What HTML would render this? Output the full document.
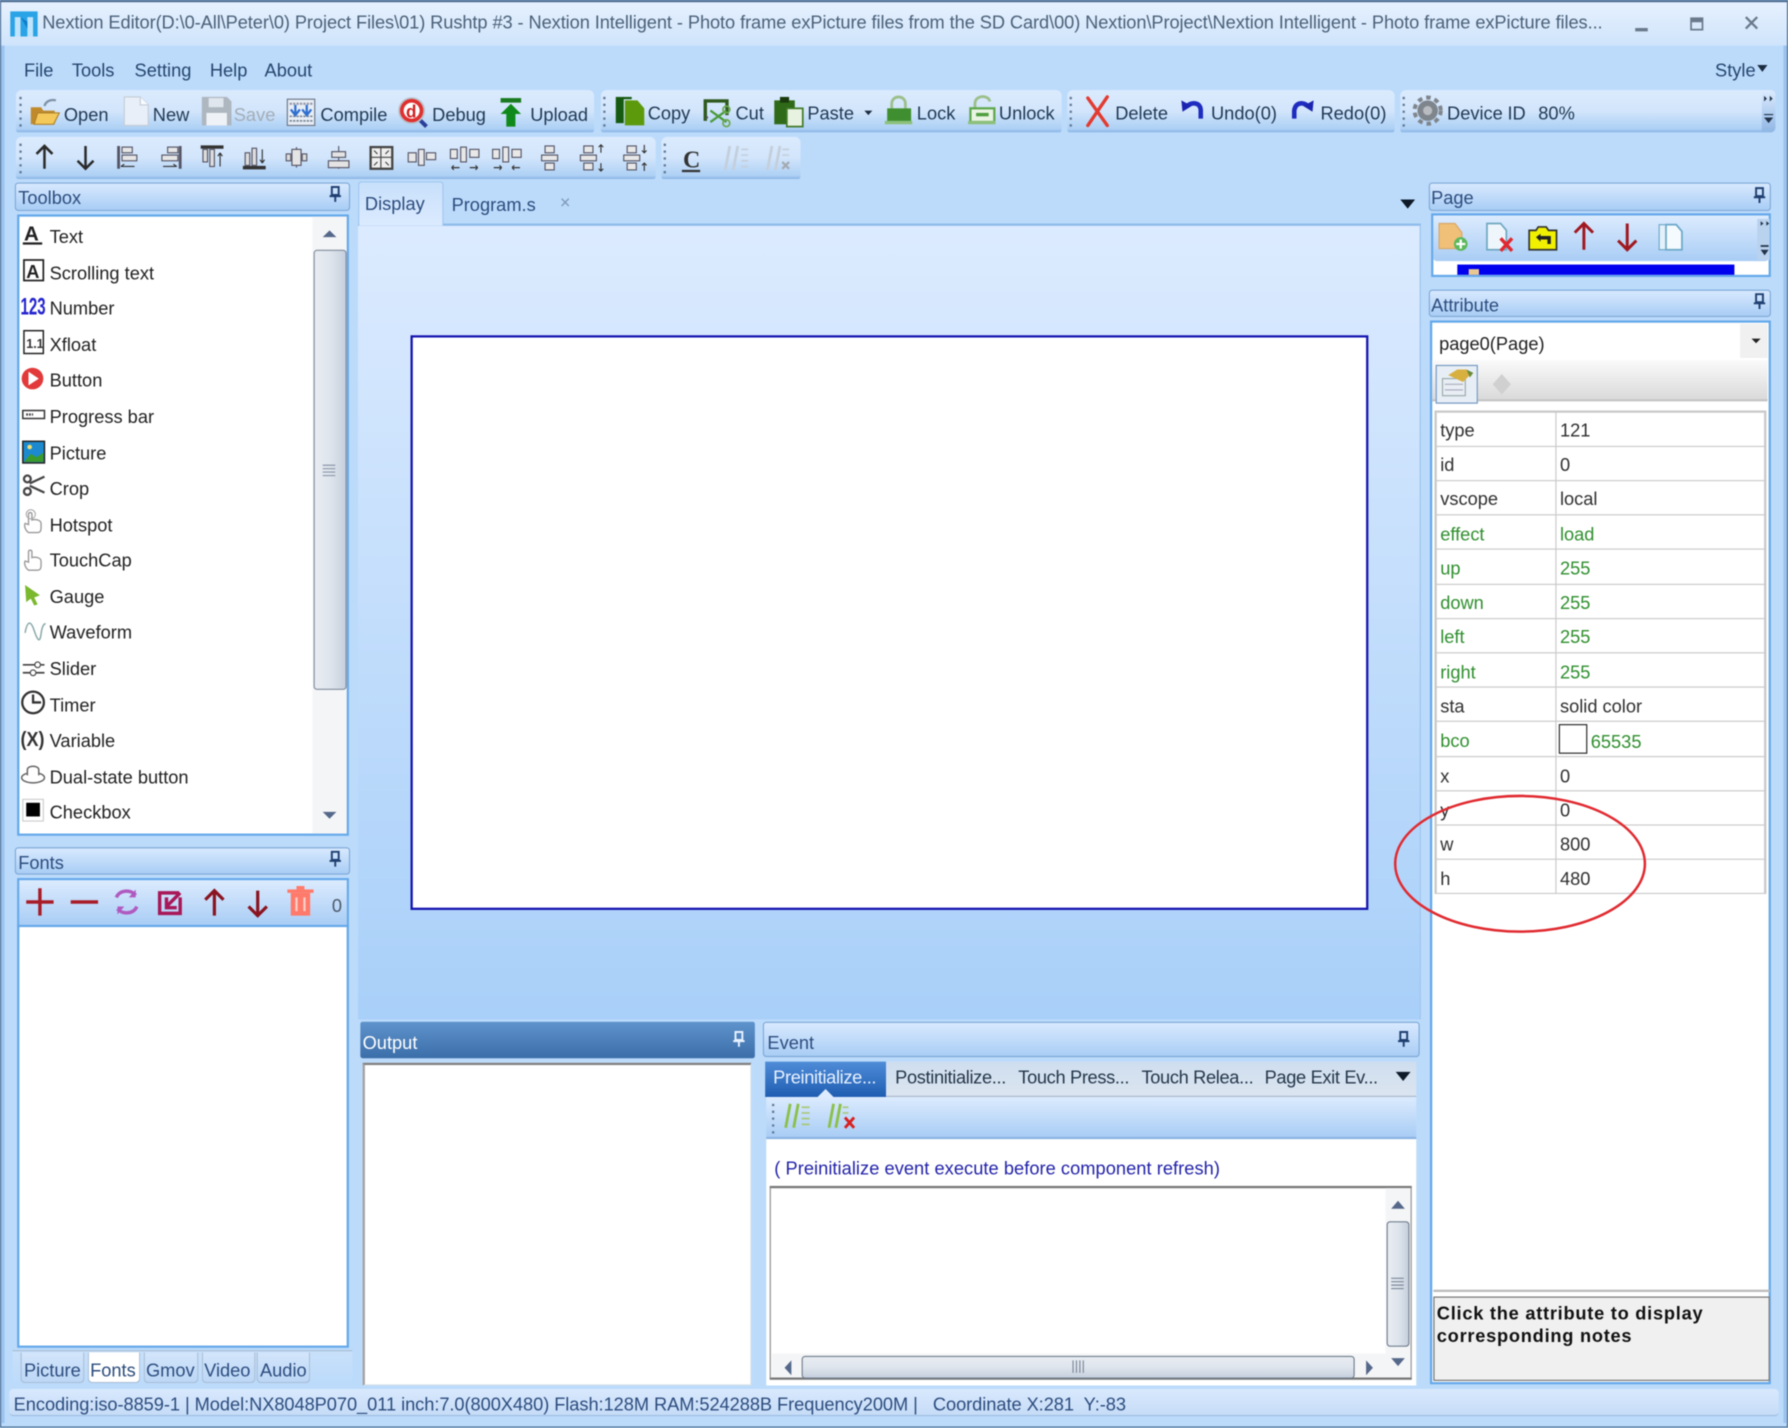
<!DOCTYPE html>
<html lang="en"><head><meta charset="utf-8"><title>Nextion Editor</title>
<style>
html,body{margin:0;padding:0;width:1788px;height:1427px;overflow:hidden;background:#bcdbfb}
#r{position:absolute;left:0;top:0;width:1568px;height:1252px;transform:scale(1.14031);transform-origin:0 0;overflow:hidden;background:#bcdbfb;font-family:"Liberation Sans",sans-serif;font-size:16px;color:#1f3854;filter:blur(.45px)}
#r div{position:absolute;box-sizing:border-box}
.t{position:absolute;white-space:nowrap;line-height:20px;height:20px;margin-top:2px}
.tb{background:linear-gradient(#dcebfe 0%,#d2e5fb 50%,#aed0f5 92%,#86b2e2 100%);border-radius:5px 5px 2px 2px}
.h{background:linear-gradient(#d8e9fe,#a9cdf5);border:1px solid #7ea8d6;border-radius:3px}
.hd{color:#2c4c7e}
.li{color:#222}
.g{color:#2f8f2f}
.r{color:#303030}
.btab{background:linear-gradient(#d3e5fb,#bcd7f6);border:1px solid #a9bdd4;border-top:0;border-radius:0 0 4px 4px;top:1186px;height:27px}
.line{background:#c9c9c9}
.ev{letter-spacing:-.3px;color:#24364a}
</style></head><body><div id="r">

<!-- window frame -->
<div style="left:0;top:0;width:1568px;height:1252px;border:1px solid #3f5f84;border-top:2px solid #4a6a8f"></div>
<div style="left:1px;top:2px;width:1566px;height:38px;background:linear-gradient(#e6f1fe,#cfe4fb)"></div>
<div style="left:1px;top:40px;width:3px;height:1208px;background:#9cc3ee"></div>
<div style="left:1564px;top:40px;width:3px;height:1208px;background:#9cc3ee"></div>

<span class="t" style="left:37px;top:9px;color:#4a6078;letter-spacing:-.076px">Nextion Editor(D:\0-All\Peter\0) Project Files\01) Rushtp #3 - Nextion Intelligent - Photo frame exPicture files from the SD Card\00) Nextion\Project\Nextion Intelligent - Photo frame exPicture files...</span>

<!-- menu -->
<span class="t" style="left:21px;top:51px;color:#25456e">File</span>
<span class="t" style="left:63px;top:51px;color:#25456e">Tools</span>
<span class="t" style="left:118px;top:51px;color:#25456e">Setting</span>
<span class="t" style="left:184px;top:51px;color:#25456e">Help</span>
<span class="t" style="left:232px;top:51px;color:#25456e">About</span>
<span class="t" style="left:1504px;top:51px;color:#25456e">Style</span>

<!-- toolbars row 1 -->
<div class="tb" style="left:14px;top:79px;width:507px;height:37px"></div>
<div class="tb" style="left:527px;top:79px;width:404px;height:37px"></div>
<div class="tb" style="left:936px;top:79px;width:287px;height:37px"></div>
<div class="tb" style="left:1228px;top:79px;width:327px;height:37px"></div>
<div style="left:1545px;top:79px;width:12px;height:37px;background:linear-gradient(#dcebfe,#8fb6e4);border-radius:0 4px 4px 0"></div>
<span class="t" style="left:56px;top:90px">Open</span>
<span class="t" style="left:134px;top:90px">New</span>
<span class="t" style="left:205px;top:90px;color:#a3adb8">Save</span>
<span class="t" style="left:281px;top:90px">Compile</span>
<span class="t" style="left:379px;top:90px">Debug</span>
<span class="t" style="left:465px;top:90px">Upload</span>
<span class="t" style="left:568px;top:89px">Copy</span>
<span class="t" style="left:645px;top:89px">Cut</span>
<span class="t" style="left:708px;top:89px">Paste</span>
<span class="t" style="left:804px;top:89px">Lock</span>
<span class="t" style="left:876px;top:89px">Unlock</span>
<span class="t" style="left:978px;top:89px">Delete</span>
<span class="t" style="left:1062px;top:89px">Undo(0)</span>
<span class="t" style="left:1158px;top:89px">Redo(0)</span>
<span class="t" style="left:1269px;top:89px">Device</span>
<span class="t" style="left:1322px;top:89px">ID</span>
<span class="t" style="left:1349px;top:89px">80%</span>

<!-- toolbars row 2 -->
<div class="tb" style="left:14px;top:120px;width:561px;height:37px"></div>
<div class="tb" style="left:580px;top:120px;width:122px;height:37px"></div>

<!-- Toolbox -->
<div class="h" style="left:13px;top:160px;width:294px;height:25px"></div>
<span class="t hd" style="left:16px;top:163px">Toolbox</span>
<div style="left:15px;top:188px;width:291px;height:545px;background:#fff;border:2px solid #64a8ea"></div>
<div style="left:274px;top:190px;width:30px;height:541px;background:#f4f5f7"></div>
<div style="left:275px;top:219px;width:29px;height:386px;background:linear-gradient(90deg,#e8ecf2,#dfe5ed 50%,#c6d0de);border:1px solid #7d8a9a;border-radius:3px"></div>
<span class="t li" style="left:43.500px;top:197px">Text</span>
<span class="t li" style="left:43.500px;top:229px">Scrolling text</span>
<span class="t li" style="left:43.500px;top:260px">Number</span>
<span class="t li" style="left:43.500px;top:292px">Xfloat</span>
<span class="t li" style="left:43.500px;top:323px">Button</span>
<span class="t li" style="left:43.500px;top:355px">Progress bar</span>
<span class="t li" style="left:43.500px;top:387px">Picture</span>
<span class="t li" style="left:43.500px;top:418px">Crop</span>
<span class="t li" style="left:43.500px;top:450px">Hotspot</span>
<span class="t li" style="left:43.500px;top:481px">TouchCap</span>
<span class="t li" style="left:43.500px;top:513px">Gauge</span>
<span class="t li" style="left:43.500px;top:544px">Waveform</span>
<span class="t li" style="left:43.500px;top:576px">Slider</span>
<span class="t li" style="left:43.500px;top:608px">Timer</span>
<span class="t li" style="left:43.500px;top:639px">Variable</span>
<span class="t li" style="left:43.500px;top:671px">Dual-state button</span>
<span class="t li" style="left:43.500px;top:702px">Checkbox</span>

<!-- Fonts -->
<div class="h" style="left:13px;top:743px;width:294px;height:24px"></div>
<span class="t hd" style="left:16px;top:746px">Fonts</span>
<div style="left:15px;top:770px;width:291px;height:412px;background:#fff;border:2px solid #64a8ea"></div>
<div style="left:17px;top:772px;width:287px;height:39px;background:linear-gradient(#dcebfe,#a9cdf5)"></div>
<div style="left:15px;top:811px;width:291px;height:2px;background:#64a8ea"></div>
<span class="t" style="left:291px;top:784px;color:#4c5a6a">0</span>

<!-- bottom-left tabs -->
<div style="left:11px;top:1184px;width:298px;height:29px;background:linear-gradient(#c9e0fa,#bcdbfb);border-top:1px solid #a9bdd4"></div>
<div class="btab" style="left:18px;width:56px"></div>
<div class="btab" style="left:77px;width:46px;background:#fff"></div>
<div class="btab" style="left:126px;width:48px"></div>
<div class="btab" style="left:177px;width:47px"></div>
<div class="btab" style="left:225px;width:47px"></div>
<span class="t hd" style="left:21px;top:1191px">Picture</span>
<span class="t hd" style="left:79px;top:1191px">Fonts</span>
<span class="t hd" style="left:128px;top:1191px">Gmov</span>
<span class="t hd" style="left:179px;top:1191px">Video</span>
<span class="t hd" style="left:228px;top:1191px">Audio</span>

<!-- Center -->
<div style="left:314px;top:196px;width:932px;height:698px;background:linear-gradient(#dcebff,#a9d0f9);border-top:2px solid #8fbcea;border-right:1px solid #9cc3ec"></div>
<div style="left:314px;top:159px;width:75px;height:39px;background:linear-gradient(#c8e0fb,#dcebff);border:1px solid #a0c5ee;border-bottom:0;border-radius:3px 3px 0 0"></div>
<span class="t" style="left:320px;top:168px;color:#2c4c7e">Display</span>
<span class="t" style="left:396px;top:169px;color:#2c4c7e">Program.s</span>
<span class="t" style="left:491px;top:167px;color:#7e98b6">×</span>
<div style="left:359.500px;top:293.500px;width:840px;height:504px;background:#fff;border:2px solid #1414b0"></div>

<!-- Output -->
<div style="left:316px;top:896px;width:346px;height:32px;background:linear-gradient(#5f93cc,#3b6ea9);border-radius:2px"></div>
<span class="t" style="left:318px;top:904px;color:#fff">Output</span>
<div style="left:318px;top:932px;width:341px;height:283px;background:#fff;border:1px solid #d5dfe8;border-top:2px solid #7f7f7f;border-left:2px solid #a0a0a0"></div>

<!-- Event -->
<div class="h" style="left:669px;top:896px;width:576px;height:31px"></div>
<span class="t" style="left:673px;top:904px;color:#2c4c7e">Event</span>
<div style="left:671px;top:931px;width:571px;height:31px;background:linear-gradient(#cfdeef,#dbe5f0);border-bottom:1px solid #aab8c8"></div>
<div style="left:671px;top:931px;width:106px;height:31px;background:linear-gradient(#4f8cd8,#1f5db2)"></div>
<span class="t ev" style="left:678px;top:934px;color:#eaf3ff">Preinitialize...</span>
<span class="t ev" style="left:785px;top:934px">Postinitialize...</span>
<span class="t ev" style="left:893px;top:934px">Touch Press...</span>
<span class="t ev" style="left:1001px;top:934px">Touch Relea...</span>
<span class="t ev" style="left:1109px;top:934px">Page Exit Ev...</span>
<div style="left:672px;top:962px;width:570px;height:37px;background:linear-gradient(#dcebfe,#a9cdf5);border-bottom:2px solid #8ab3e0"></div>
<div style="left:672px;top:999px;width:570px;height:216px;background:#fff"></div>
<span class="t" style="left:679px;top:1014px;color:#2222aa;letter-spacing:.04px">( Preinitialize event execute before component refresh)</span>
<div style="left:675px;top:1040px;width:563px;height:170px;background:#fff;border:1px solid #8a8a8a;border-top:2px solid #777;border-bottom:2px solid #777"></div>
<div style="left:1215px;top:1042px;width:22px;height:166px;background:#f4f5f7"></div>
<div style="left:677px;top:1187px;width:560px;height:21px;background:#f4f5f7"></div>
<div style="left:1216px;top:1071px;width:20px;height:110px;background:linear-gradient(90deg,#e8ecf2,#dfe5ed 50%,#c6d0de);border:1px solid #6f7c8c;border-radius:3px"></div>
<div style="left:703px;top:1189px;width:485px;height:20px;background:linear-gradient(#e8ecf2,#dfe5ed 50%,#c6d0de);border:1px solid #6f7c8c;border-radius:3px"></div>

<!-- Right panels -->
<div class="h" style="left:1253px;top:160px;width:300px;height:25px"></div>
<span class="t hd" style="left:1255px;top:163px">Page</span>
<div style="left:1255px;top:187px;width:298px;height:56px;background:#fff;border:2px solid #64a8ea"></div>
<div style="left:1257px;top:189px;width:294px;height:40px;background:linear-gradient(#dcebfe,#a9cdf5);border-radius:0 0 3px 3px"></div>
<div style="left:1278px;top:232px;width:243px;height:9px;background:#0000ee"></div>
<div style="left:1288px;top:236px;width:9px;height:5px;background:#e8c890"></div>
<div class="h" style="left:1253px;top:254px;width:300px;height:24px"></div>
<span class="t hd" style="left:1255px;top:257px">Attribute</span>
<div style="left:1254px;top:281px;width:299px;height:933px;background:#fff;border:2px solid #64a8ea"></div>
<div style="left:1526px;top:284px;width:24px;height:30px;background:#f0f0f0"></div>
<span class="t" style="left:1262px;top:291px;color:#222">page0(Page)</span>
<div style="left:1256px;top:316px;width:294px;height:36px;background:linear-gradient(#fafafa,#dadada);border-bottom:2px solid #c4c4c4"></div>
<div style="left:1259px;top:320px;width:37px;height:34px;background:#e8eef5;border:1px solid #6f97c2"></div>

<!-- attribute grid -->
<div style="left:1258px;top:360px;width:291px;height:424px;background:#fff;border:2px solid #c9c9c9;border-bottom:1px solid #c9c9c9"></div>
<div class="line" style="left:1364px;top:360px;width:1px;height:424px"></div>
<div class="line" style="left:1258px;top:391px;width:291px;height:1px"></div>
<div class="line" style="left:1258px;top:421px;width:291px;height:1px"></div>
<div class="line" style="left:1258px;top:451px;width:291px;height:1px"></div>
<div class="line" style="left:1258px;top:481px;width:291px;height:1px"></div>
<div class="line" style="left:1258px;top:512px;width:291px;height:1px"></div>
<div class="line" style="left:1258px;top:542px;width:291px;height:1px"></div>
<div class="line" style="left:1258px;top:572px;width:291px;height:1px"></div>
<div class="line" style="left:1258px;top:602px;width:291px;height:1px"></div>
<div class="line" style="left:1258px;top:632px;width:291px;height:1px"></div>
<div class="line" style="left:1258px;top:663px;width:291px;height:1px"></div>
<div class="line" style="left:1258px;top:693px;width:291px;height:1px"></div>
<div class="line" style="left:1258px;top:723px;width:291px;height:1px"></div>
<div class="line" style="left:1258px;top:753px;width:291px;height:1px"></div>
<span class="t r" style="left:1263px;top:367px">type</span><span class="t r" style="left:1368px;top:367px">121</span>
<span class="t r" style="left:1263px;top:397px">id</span><span class="t r" style="left:1368px;top:397px">0</span>
<span class="t r" style="left:1263px;top:427px">vscope</span><span class="t r" style="left:1368px;top:427px">local</span>
<span class="t g" style="left:1263px;top:458px">effect</span><span class="t g" style="left:1368px;top:458px">load</span>
<span class="t g" style="left:1263px;top:488px">up</span><span class="t g" style="left:1368px;top:488px">255</span>
<span class="t g" style="left:1263px;top:518px">down</span><span class="t g" style="left:1368px;top:518px">255</span>
<span class="t g" style="left:1263px;top:548px">left</span><span class="t g" style="left:1368px;top:548px">255</span>
<span class="t g" style="left:1263px;top:579px">right</span><span class="t g" style="left:1368px;top:579px">255</span>
<span class="t r" style="left:1263px;top:609px">sta</span><span class="t r" style="left:1368px;top:609px">solid color</span>
<span class="t g" style="left:1263px;top:639px">bco</span>
<div style="left:1367px;top:635px;width:25px;height:26px;background:#fff;border:1.5px solid #222"></div>
<span class="t g" style="left:1395px;top:640px">65535</span>
<span class="t r" style="left:1263px;top:670px">x</span><span class="t r" style="left:1368px;top:670px">0</span>
<span class="t r" style="left:1263px;top:700px">y</span><span class="t r" style="left:1368px;top:700px">0</span>
<span class="t r" style="left:1263px;top:730px">w</span><span class="t r" style="left:1368px;top:730px">800</span>
<span class="t r" style="left:1263px;top:760px">h</span><span class="t r" style="left:1368px;top:760px">480</span>

<!-- notes -->
<div style="left:1257px;top:1131px;width:295px;height:2px;background:#bcbcbc"></div>
<div style="left:1257px;top:1137px;width:295px;height:74px;background:#f0f0f0;border:1px solid #707070"></div>
<span class="t" style="left:1260px;top:1141px;font-weight:bold;color:#111;letter-spacing:.65px">Click the attribute to display</span>
<span class="t" style="left:1260px;top:1161px;font-weight:bold;color:#111;letter-spacing:.65px">corresponding notes</span>

<!-- status -->
<div style="left:8px;top:1218px;width:1552px;height:24px;background:linear-gradient(#d9e9fd,#c6dcf7);border-bottom:1px solid #97b8dd;border-radius:4px"></div>
<span class="t" style="left:12px;top:1221px;letter-spacing:-.05px;color:#2c4c7e">Encoding:iso-8859-1 | Model:NX8048P070_011 inch:7.0(800X480) Flash:128M RAM:524288B Frequency200M |&nbsp;&nbsp; Coordinate X:281&nbsp; Y:-83</span>

<!-- icon layer -->
<svg style="position:absolute;left:0;top:0" width="1568" height="1252" viewBox="0 0 1568 1252" xmlns="http://www.w3.org/2000/svg">
<!-- logo -->
<rect x="9" y="10" width="24" height="22" fill="#2aa4e6"/>
<path d="M13 32V15h5v17M24 32V15h5v17" fill="#bfe4fb"/>
<path d="M18 15l6 10v-6z" fill="#0f7ccc"/>
<!-- window buttons -->
<path d="M1434 26h11" stroke="#6a7a8c" stroke-width="3"/>
<rect x="1483" y="16" width="10" height="10" fill="none" stroke="#6a7a8c" stroke-width="1.5"/><path d="M1483 18h10" stroke="#6a7a8c" stroke-width="3"/>
<path d="M1531 15l10 10M1541 15l-10 10" stroke="#6a7a8c" stroke-width="2"/>
<path d="M1541 57h9l-4.500 6z" fill="#1c2c40"/>
<!-- grip dots -->
<path d="M18 85v26M530 85v26M939 85v26M1231 85v26M18 126v26M583 126v26M678 968v26" stroke="#5f7894" stroke-width="2" stroke-dasharray="2 4"/>

<!-- Open -->
<path d="M27 94h9l2 3h10v12H27z" fill="#c08a2c"/><path d="M30 109l3-10h19l-5 10z" fill="#f4c95a" stroke="#b0822a"/>
<path d="M39 93c1-4 5-6 10-5" fill="none" stroke="#7f93a8" stroke-width="2"/>
<!-- New -->
<path d="M109 85h14l7 7v18h-21z" fill="#e9eff8" stroke="#c4ccd6"/><path d="M123 85v7h7" fill="#f8fbff" stroke="#c4ccd6"/>
<!-- Save -->
<path d="M177 85h22l4 4v21h-26z" fill="#aeb6bf"/><rect x="183" y="86" width="13" height="8" fill="#dfe6ee"/><rect x="181" y="99" width="18" height="11" fill="#eef2f7"/>
<!-- Compile -->
<rect x="252" y="87" width="24" height="23" fill="#e8eef6" stroke="#6a7484"/><path d="M254 102h20M254 106h20" stroke="#7a8696" stroke-width="1.500" stroke-dasharray="2 1"/><path d="M254 91h20" stroke="#99a" stroke-width="2" stroke-dasharray="2 1"/>
<path d="M259 92v8M255 96l4 5 4-5M269 92v8M265 96l4 5 4-5" fill="none" stroke="#2f6fd0" stroke-width="2"/>
<!-- Debug -->
<path d="M367 104l7 7" stroke="#2a3f9a" stroke-width="3.500"/><circle cx="361" cy="97" r="11" fill="#e03030" stroke="#b8c0c8" stroke-width="1.500"/><circle cx="361" cy="97" r="7" fill="#fff"/>
<text x="356" y="103" font-family="Liberation Sans" font-size="15" font-weight="bold" fill="#d02020">d</text>
<!-- Upload -->
<rect x="439" y="86" width="18" height="4" fill="#1a7a20"/><path d="M448 91l9 9h-5v11h-8v-11h-5z" fill="#0f8a1a"/>
<!-- Copy -->
<rect x="540" y="85" width="7" height="23" fill="#155a10"/><rect x="546" y="85" width="8" height="2" fill="#155a10"/><path d="M548 88h11l6 7v15h-17z" fill="#5c9a0c"/>
<!-- Cut -->
<path d="M617 87h22v14h-3V90h-16v16h-3z" fill="#2f5a1e"/><path d="M623 97l14 10M623 107l14-10" stroke="#4a9a3c" stroke-width="2"/><circle cx="620" cy="103" r="1" fill="#555"/><circle cx="637" cy="96" r="3" fill="none" stroke="#6aa84f" stroke-width="1.500"/><circle cx="637" cy="108" r="3" fill="none" stroke="#6aa84f" stroke-width="1.500"/>
<!-- Paste -->
<rect x="679" y="88" width="18" height="21" fill="#2f6a18"/><rect x="684" y="85" width="8" height="5" fill="#1a3a0c"/><rect x="690" y="95" width="14" height="16" fill="#e8f2e0" stroke="#3f7a28" stroke-width="1.500"/>
<path d="M758 97h7l-3.500 4z" fill="#1c2c40"/>
<!-- Lock -->
<path d="M782 95v-4c0-8 12-8 12 0v4" fill="none" stroke="#9cc08c" stroke-width="2.500"/><rect x="778" y="95" width="21" height="12" fill="#3f8f30"/><rect x="776" y="106" width="24" height="3" fill="#8cc07c"/>
<!-- Unlock -->
<path d="M855 95v-4c0-8 12-8 13-2" fill="none" stroke="#9cc08c" stroke-width="2.500"/><rect x="851" y="95" width="21" height="12" fill="#eaf4e4" stroke="#5fa84f" stroke-width="2"/><rect x="856" y="99" width="11" height="3" fill="#4f9f3f"/><rect x="849" y="106" width="24" height="3" fill="#8cc07c"/>
<!-- Delete -->
<path d="M954 86l17 24M971 85l-17 25" stroke="#e23b30" stroke-width="3" stroke-linecap="round"/>
<!-- Undo / Redo -->
<path d="M1041 93c5-4 12-3 12 4v7" fill="none" stroke="#1f2cc0" stroke-width="4"/><path d="M1036 88l1 10 8-5z" fill="#1a24b0"/>
<path d="M1147 93c-5-4-11-3-12 4v7" fill="none" stroke="#1f2cc0" stroke-width="4"/><path d="M1152 88l-1 10-8-5z" fill="#1a24b0"/>
<!-- Gear -->
<circle cx="1252" cy="97" r="9" fill="#7f858c"/><circle cx="1252" cy="97" r="11.500" fill="none" stroke="#7f858c" stroke-width="3.500" stroke-dasharray="4 3.500"/><circle cx="1252" cy="97" r="4" fill="#b8bcc0"/>
<!-- overflow -->
<path d="M1547 84l2.500 2.500-2.500 2.500zM1552 84l2.500 2.500-2.500 2.500zM1548 100h6M1547 103h8l-4 5z" fill="#223348" stroke="none"/><path d="M1547 100.500h8" stroke="#223348"/>

<!-- Row 2 -->
<g fill="none" stroke="#2a2a2a" stroke-width="2.200">
<path d="M39 148v-20M32 135l7-7 7 7"/>
<path d="M75 128v20M68 141l7 7 7-7"/>
</g>
<g fill="none" stroke="#556">
<path d="M104 128v20" stroke-width="2.500"/><rect x="107" y="129" width="9" height="5" fill="#e6e6e6"/><rect x="107" y="136" width="13" height="5" fill="#e6e6e6"/><path d="M106 146h12M106 146l3-2" stroke="#333"/>
<path d="M158 128v20" stroke-width="2.500"/><rect x="147" y="129" width="9" height="5" fill="#e6e6e6"/><rect x="142" y="136" width="14" height="5" fill="#e6e6e6"/><path d="M143 146h12M155 146l-3-2" stroke="#333"/>
<path d="M176 129h20" stroke="#333" stroke-width="3"/><rect x="178" y="131" width="4" height="11" fill="#ddd"/><rect x="184" y="131" width="4" height="15" fill="#ddd"/><path d="M193 146v-12M193 134l-2 3M193 134l2 3" stroke="#333"/>
<path d="M213 147h20" stroke="#333" stroke-width="3"/><rect x="215" y="134" width="4" height="11" fill="#ddd"/><rect x="221" y="130" width="4" height="15" fill="#ddd"/><path d="M230 131v12M230 143l-2-3M230 143l2-3" stroke="#333"/>
<path d="M260 129v18"/><rect x="256" y="131" width="8" height="14" fill="#e4e4e4"/><rect x="251" y="135" width="4" height="6" fill="#ddd"/><rect x="265" y="135" width="4" height="6" fill="#ddd"/>
<path d="M297 128v20"/><rect x="291" y="133" width="12" height="5" fill="#e4e4e4"/><rect x="288" y="141" width="18" height="6" fill="#e4e4e4"/>
<rect x="325" y="129" width="19" height="19" fill="#efefef" stroke="#444" stroke-width="2"/><path d="M334 129v19M325 138h19M328 132l3 3M341 132l-3 3M328 145l3-3M341 145l-3-3" stroke="#444"/>
<rect x="358" y="134" width="7" height="8" fill="#e8e8e8"/><rect x="367" y="131" width="5" height="14" fill="#e8e8e8"/><rect x="374" y="134" width="8" height="6" fill="#e8e8e8"/>
<rect x="395" y="131" width="6" height="8" fill="#e8e8e8"/><rect x="404" y="129" width="5" height="13" fill="#e8e8e8"/><rect x="412" y="131" width="8" height="7" fill="#e8e8e8"/><path d="M396 147h7M396 147l2-2M396 147l2 2M412 147h7M419 147l-2-2M419 147l-2 2" stroke="#333"/>
<rect x="432" y="131" width="6" height="8" fill="#e8e8e8"/><rect x="441" y="129" width="5" height="13" fill="#e8e8e8"/><rect x="449" y="131" width="8" height="7" fill="#e8e8e8"/><path d="M433 147h7M440 147l-2-2M440 147l-2 2M449 147h7M449 147l2-2M449 147l2 2" stroke="#333"/>
<rect x="478" y="128" width="8" height="6" fill="#e8e8e8"/><rect x="475" y="136" width="14" height="5" fill="#e8e8e8"/><rect x="478" y="143" width="8" height="6" fill="#e8e8e8"/>
<rect x="512" y="128" width="8" height="6" fill="#e8e8e8"/><rect x="509" y="136" width="14" height="5" fill="#e8e8e8"/><rect x="512" y="143" width="8" height="6" fill="#e8e8e8"/><path d="M527 127v7M525 129l2-2 2 2M527 143v7M525 148l2 2 2-2" stroke="#333"/>
<rect x="550" y="128" width="8" height="6" fill="#e8e8e8"/><rect x="547" y="136" width="14" height="5" fill="#e8e8e8"/><rect x="550" y="143" width="8" height="6" fill="#e8e8e8"/><path d="M565 127v7M563 132l2 2 2-2M565 143v7M563 145l2-2 2 2" stroke="#333"/>
</g>
<text x="599" y="147" font-family="Liberation Serif" font-size="21" font-weight="bold" fill="#333">C</text><path d="M598 150h16" stroke="#333" stroke-width="2"/>
<g fill="none" stroke="#c4cfdc" stroke-width="2.500"><path d="M636 149l4-21M643 149l4-21M673 149l4-21M680 149l4-21"/><path d="M650 131h6M650 136h6M650 141h6M650 146h6" stroke-width="1.500"/><path d="M686 131h6M686 136h6" stroke-width="1.500"/></g>
<path d="M686 142l6 6M692 142l-6 6" stroke="#a4aab2" stroke-width="2"/>

<!-- pins -->
<g fill="none" stroke="#1f3f70" stroke-width="1.700">
<path d="M291 164h6v7h-6zM289 172h10M294 172v5"/>
<path d="M291 747h6v7h-6zM289 755h10M294 755v5"/>
<path d="M1540 165h6v7h-6zM1538 173h10M1543 173v5"/>
<path d="M1540 258h6v7h-6zM1538 266h10M1543 266v5"/>
<path d="M1228 905h6v7h-6zM1226 913h10M1231 913v5"/>
<path d="M645 905h6v7h-6zM643 913h10M648 913v5" stroke="#e8f2ff"/>
</g>
<!-- scroll arrows -->
<path d="M283 208h12l-6-6zM283 712h12l-6 6z" fill="#55688a"/>
<path d="M283 408h11M283 411h11M283 414h11M283 417h11" stroke="#8a96a8"/>
<path d="M1220 1060h12l-6-7zM1220 1191h12l-6 7z" fill="#55688a"/>
<path d="M1220 1121h11M1220 1124h11M1220 1127h11M1220 1130h11" stroke="#7a8698"/>
<path d="M694 1193v13l-6-6.500zM1198 1193v13l6-6.500z" fill="#55688a"/>
<path d="M941 1193v11M944 1193v11M947 1193v11M950 1193v11" stroke="#7a8698"/>
<!-- tab arrows -->
<path d="M1228 175h13l-6.500 8z" fill="#0e1a28"/>
<path d="M1224 940h13l-6.500 8z" fill="#0e1a28"/>
<path d="M717 962l7-7 7 7z" fill="#dcebfe"/>
<path d="M1536 297h8l-4 4z" fill="#222"/>

<!-- Toolbox icons -->
<g>
<text x="21" y="211" font-family="Liberation Sans" font-size="18" font-weight="bold" fill="#222">A</text><path d="M20 213.500h17" stroke="#222" stroke-width="2"/>
<rect x="21" y="228" width="17" height="18" fill="#fff" stroke="#222" stroke-width="1.500"/><text x="23" y="244" font-family="Liberation Sans" font-size="16" font-weight="bold" fill="#222">A</text>
<text x="18" y="276" font-family="Liberation Sans" font-size="21" font-weight="bold" fill="#2424d0" textLength="22" lengthAdjust="spacingAndGlyphs">123</text>
<rect x="21" y="290" width="17" height="20" fill="#fff" stroke="#222" stroke-width="1.300"/><text x="23" y="305" font-family="Liberation Sans" font-size="11" font-weight="bold" fill="#333">1.1</text>
<circle cx="28.500" cy="332" r="9.500" fill="#e23a3a"/><path d="M25 326l9 6-9 6z" fill="#fff"/>
<rect x="20" y="360" width="19" height="7" fill="#fff" stroke="#333" stroke-width="1.300"/><path d="M23 363.500h6" stroke="#333" stroke-width="2" stroke-dasharray="1.500 1"/>
<rect x="20" y="387" width="19" height="19" fill="#1d8ad0" stroke="#222" stroke-width="1.300"/><path d="M21 405l6-7 5 3 6-4v8z" fill="#3a9a2a"/><circle cx="26" cy="392" r="2" fill="#f4e070"/>
<path d="M26 424l13-6M26 426l13 6" stroke="#444" stroke-width="2"/><circle cx="24" cy="420" r="3" fill="#fff" stroke="#444" stroke-width="2"/><circle cx="24" cy="431" r="3" fill="#fff" stroke="#444" stroke-width="2"/>
<path d="M25 467c-3-2-4-6-3-8l3 1v-9c0-2 3-2 3 0v5c3-1 8 0 8 3v4c0 3-1 4-3 4z" fill="#fff" stroke="#999" stroke-width="1.200"/><circle cx="27" cy="451" r="4" fill="none" stroke="#aaa"/>
<path d="M25 500c-3-2-4-6-3-8l3 1v-9c0-2 3-2 3 0v5c3-1 8 0 8 3v4c0 3-1 4-3 4z" fill="#fff" stroke="#999" stroke-width="1.200"/>
<path d="M22 513l13 9-5 2 3 6-3 1-3-6-4 3z" fill="#7ab82e"/>
<path d="M22 553c2-11 5-11 8-2s5 11 6 3 3-9 4-9" transform="translate(0 2)" fill="none" stroke="#8aa8a8" stroke-width="1.300"/>
<path d="M20 583h19M20 590h19" stroke="#444" stroke-width="1.500"/><circle cx="33" cy="583" r="2.500" fill="#fff" stroke="#444"/><circle cx="29" cy="590" r="2.500" fill="#fff" stroke="#444"/>
<circle cx="29" cy="616" r="9.500" fill="#fff" stroke="#333" stroke-width="2"/><path d="M29 609v7h7" fill="none" stroke="#333" stroke-width="2"/>
<text x="18" y="654" font-family="Liberation Sans" font-size="18" font-weight="bold" fill="#333" textLength="21" lengthAdjust="spacingAndGlyphs">(X)</text>
<ellipse cx="29" cy="682" rx="10" ry="4.500" fill="none" stroke="#666" stroke-width="1.300"/><path d="M24 680v-5c0-4 10-4 10 0v5" fill="#fff" stroke="#666" stroke-width="1.300"/>
<rect x="20" y="701" width="18" height="19" fill="#fff" stroke="#ccc"/><rect x="23" y="704" width="12" height="12" fill="#000"/>
</g>

<!-- Fonts toolbar -->
<g fill="none" stroke="#a81c28" stroke-width="3">
<path d="M35 779v24M23 791h24"/>
<path d="M62 791h24"/>
</g>
<path d="M102 787c3-7 13-7 17-2M120 795c-3 7-13 7-17 2" fill="none" stroke="#b05ac0" stroke-width="3"/><path d="M119 780v7h-6M103 802v-7h6" fill="#b05ac0"/>
<path d="M157 783h-17v18h18v-14" fill="none" stroke="#a81858" stroke-width="3"/><path d="M158 783l-12 12M146 787v9h9" fill="none" stroke="#a81858" stroke-width="3"/>
<g fill="none" stroke="#8a1420" stroke-width="2.800"><path d="M188 803v-22M180 789l8-8 8 8"/><path d="M226 781v22M218 795l8 8 8-8"/></g>
<rect x="255" y="783" width="17" height="20" fill="#ff7a6a"/><rect x="252" y="780" width="23" height="3" fill="#ff7a6a"/><rect x="260" y="777" width="7" height="3" fill="#ff7a6a"/><path d="M260 787v12M267 787v12" stroke="#ffd0c8" stroke-width="2"/>

<!-- Event toolbar -->
<g fill="none" stroke="#8cc04a" stroke-width="2.500"><path d="M689 989l4-21M696 989l4-21M727 989l4-21M733 989l4-21"/><path d="M703 971h7M703 976h7M703 981h7M703 986h7M739 971h5M739 976h5" stroke-width="1.500" stroke="#a8c878"/></g>
<path d="M741 980l8 9M749 980l-8 9" stroke="#d82020" stroke-width="2.500"/>

<!-- Page toolbar -->
<path d="M1262 196h14l6 8v14h-20z" fill="#f0c078" stroke="#d8a868"/><circle cx="1281" cy="214" r="6" fill="#5cb85c"/><path d="M1277 214h8M1281 210v8" stroke="#fff" stroke-width="2"/>
<path d="M1304 196h12l5 6v17h-17z" fill="#eef6fc" stroke="#6fa8c0" stroke-width="1.500"/><path d="M1316 209l10 11M1326 209l-10 11" stroke="#e02830" stroke-width="3"/>
<path d="M1341 202h6l2-3h7l2 3h7v17h-24z" fill="#f0f000" stroke="#333" stroke-width="1.500"/><path d="M1347 208l4-3v2h9v7h-3v-4h-6v2z" fill="#222"/>
<g fill="none" stroke="#a01820" stroke-width="2.600"><path d="M1389 219v-22M1381 204l8-8 8 8"/><path d="M1427 196v22M1419 211l8 8 8-8"/></g>
<path d="M1455 197h8v22h-8z" fill="#e4f0fa" stroke="#6aa8c8"/><path d="M1461 197h9l5 6v16h-14z" fill="#f4fafe" stroke="#6aa8c8" stroke-width="1.500"/>
<rect x="1541" y="192" width="11" height="36" fill="#b9d2ee"/><path d="M1544 194l2.500 2-2.500 2zM1549 194l2.500 2-2.500 2zM1544 215h7v1.500h-7zM1544 219h7l-3.500 5z" fill="#223348"/>
<!-- attr icons -->
<rect x="1265" y="332" width="20" height="15" fill="#e8eef4" stroke="#9aa"/><path d="M1267 337h16M1267 342h16" stroke="#aab"/><path d="M1270 329l8-5h8l3 5-6 6z" fill="#d8b040"/><path d="M1286 324l6 3-3 4z" fill="#6a8a3a"/>
<path d="M1317 328l8 9-8 9-8-9z" fill="#d0d0d0"/>

<!-- Red ellipse -->
<ellipse cx="1333" cy="757.500" rx="109.500" ry="59.500" fill="none" stroke="#e02a30" stroke-width="2.200"/>
</svg>
</div></body></html>
